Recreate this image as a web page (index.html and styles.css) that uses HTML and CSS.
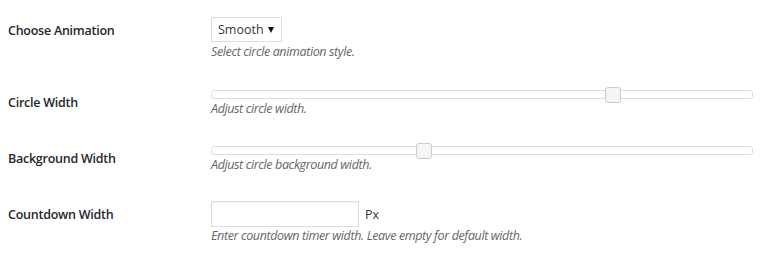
FILE: index.html
```html
<!DOCTYPE html>
<html lang="en">
<head>
    <meta charset="UTF-8">
    <meta name="viewport" content="width=device-width, initial-scale=1.0">
    <title>Circle settings</title>
    <link rel="stylesheet" href="styles.css">
</head>
<body>
    <main class="form-table">
        <!-- animation style -->
        <div class="row row-first">
            <label class="row-label" for="anim">Choose Animation</label>
            <div class="row-field">
                <span class="select-wrap">
                    <select id="anim" class="select">
                        <option>Smooth</option>
                        <option>Bounce</option>
                    </select>
                </span>
                <p class="description">Select circle animation style.</p>
            </div>
        </div>
        <!-- circle width -->
        <div class="row">
            <label class="row-label" for="circle-w">Circle Width</label>
            <div class="row-field">
                <input id="circle-w" class="range" type="range" min="0" max="100" value="75">
                <p class="description">Adjust circle width.</p>
            </div>
        </div>
        <!-- background width -->
        <div class="row">
            <label class="row-label" for="bg-w">Background Width</label>
            <div class="row-field">
                <input id="bg-w" class="range" type="range" min="0" max="100" value="39">
                <p class="description">Adjust circle background width.</p>
            </div>
        </div>
        <!-- countdown width -->
        <div class="row">
            <label class="row-label" for="count-w">Countdown Width</label>
            <div class="row-field">
                <div class="input-line">
                    <input id="count-w" class="text-input" type="text">
                    <span class="unit">Px</span>
                </div>
                <p class="description">Enter countdown timer width. Leave empty for default width.</p>
            </div>
        </div>
    </main>
</body>
</html>
```

FILE: styles.css
```css
html,body{
    margin: 0;
    background-color: #fff;
}
body{
    font-family: "Open Sans", "Noto Sans", sans-serif;
    font-size: 12.5px;
    color: #444;
}
.form-table{
    padding: 2px 15px 0 8px;
}
.row{
    display: grid;
    grid-template-columns: 203px 1fr;
}
.row-label{
    padding-top: 20px;
    font-weight: 600;
    line-height: 18px;
    letter-spacing: -0.25px;
    color: #23282d;
}
.row-field{
    padding: 15px 0 12px;
}
.row-first .row-field{
    padding-bottom: 13px;
}
.description{
    margin: 0;
    font-style: italic;
    line-height: 18px;
    letter-spacing: -0.38px;
    color: #666;
}
.row-first .description{
    margin-top: 1px;
}
/* select box with drawn arrow */
.select-wrap{
    display: inline-block;
    position: relative;
}
.select-wrap::after{
    content: "";
    position: absolute;
    right: 8px;
    top: 10px;
    border-left: 3.5px solid transparent;
    border-right: 3.5px solid transparent;
    border-top: 6px solid #111;
    pointer-events: none;
}
.select{
    -webkit-appearance: none;
    appearance: none;
    width: 71px;
    height: 25px;
    margin: 0;
    padding: 0 0 0 6px;
    border: 1px solid #ddd;
    border-radius: 0;
    background: #fff;
    font: 12.5px "Open Sans", "Noto Sans", sans-serif;
    color: #32373c;
    display: block;
}
/* range sliders */
.range{
    -webkit-appearance: none;
    appearance: none;
    display: block;
    width: 542px;
    height: 11px;
    margin: 0;
    background: transparent;
}
.range::-webkit-slider-runnable-track{
    height: 9px;
    border: 1px solid #ddd;
    border-radius: 3px;
    background: #fff;
}
.range::-webkit-slider-thumb{
    -webkit-appearance: none;
    width: 16px;
    height: 16px;
    margin-top: -4px;
    border: 1px solid #ccc;
    border-radius: 3px;
    background: #f5f5f5;
    box-sizing: border-box;
}
.input-line{
    display: flex;
    align-items: center;
    gap: 6px;
}
.text-input{
    width: 148px;
    height: 26px;
    margin: 0;
    padding: 0 5px;
    box-sizing: border-box;
    border: 1px solid #ddd;
    box-shadow: inset 0 1px 2px rgba(0,0,0,.07);
    font: 12.5px "Open Sans", sans-serif;
}
.unit{
    color: #32373c;
}
```
